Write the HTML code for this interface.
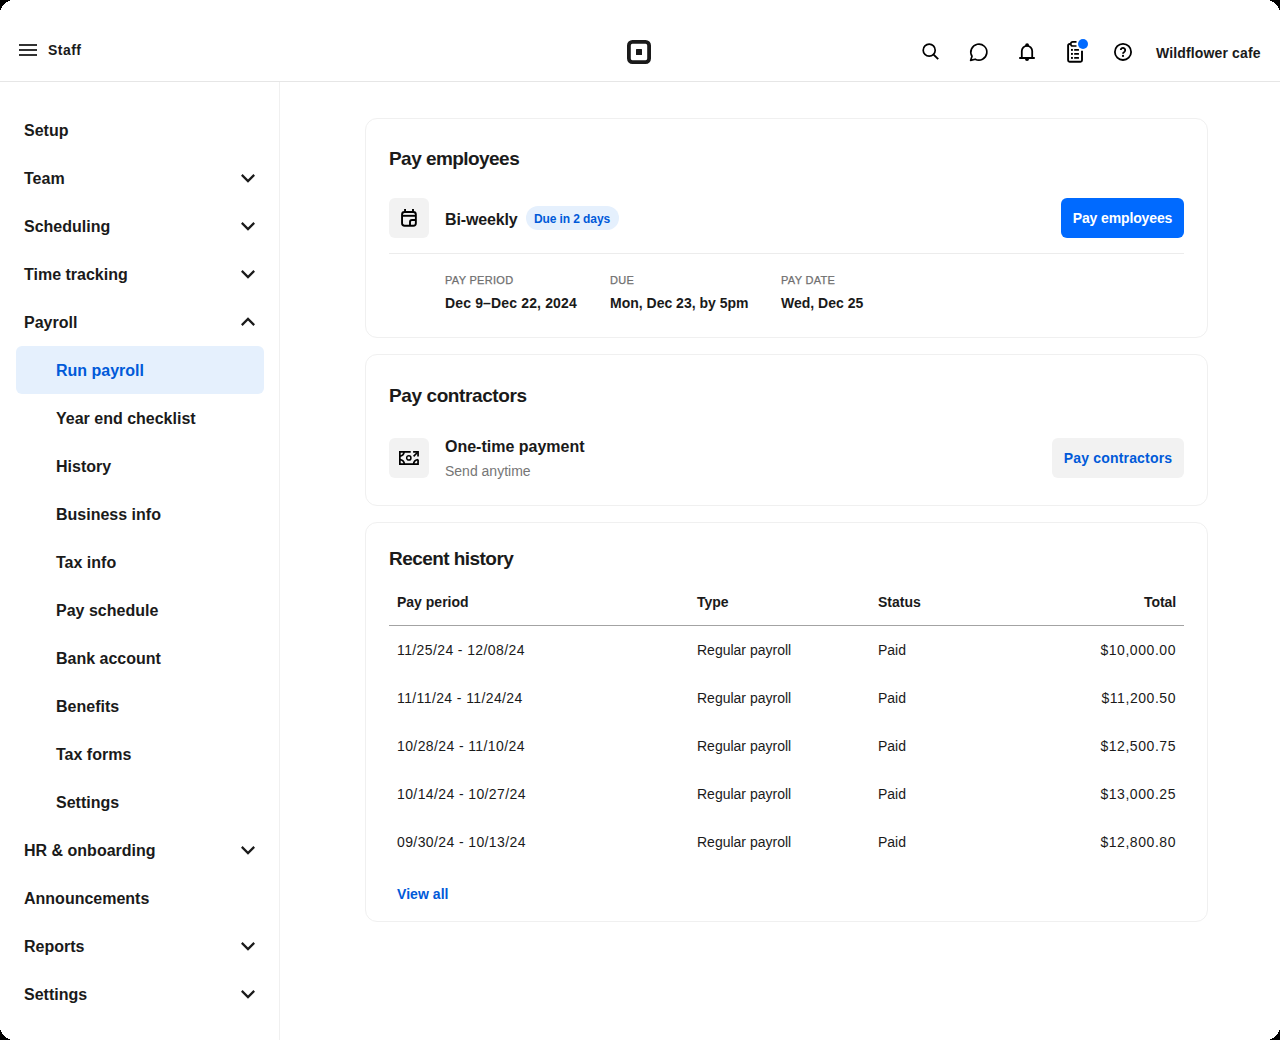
<!DOCTYPE html>
<html><head><meta charset="utf-8">
<style>
*{box-sizing:border-box;margin:0;padding:0}
html,body{width:1280px;height:1040px;background:#000;overflow:hidden}
body{font-family:"Liberation Sans",sans-serif;color:#1a1a1a}
.win{position:absolute;left:0;top:0;width:1280px;height:1040px;background:#fff;overflow:hidden}
.hdr{position:absolute;left:0;top:0;width:1280px;height:82px;border-bottom:1px solid #e6e6e6}
.abs{position:absolute}
svg.abs{overflow:visible}
.t{position:absolute;white-space:nowrap;line-height:1}
.side{position:absolute;left:0;top:82px;width:280px;height:958px;border-right:1px solid #f0f0f0}
.nav{position:absolute;left:24px;font-size:16px;font-weight:700;white-space:nowrap;line-height:20px}
.sub{left:56px}
.chev{position:absolute;left:240px;width:16px;height:16px}
.card{position:absolute;left:365px;width:843px;border:1px solid #f0f0f0;border-radius:12px;background:#fff}
.h2{position:absolute;left:23px;font-size:19px;font-weight:700;line-height:24px;white-space:nowrap;letter-spacing:-0.55px}
.ibox{position:absolute;left:23px;width:40px;height:40px;background:#f2f2f2;border-radius:6px}
.ibox svg{position:absolute}
.btn{position:absolute;height:40px;border-radius:6px;display:flex;align-items:center;justify-content:center;font-size:14px;font-weight:700;letter-spacing:-0.2px;white-space:nowrap}
.lbl{position:absolute;white-space:nowrap;line-height:1;font-size:11px;color:#6f6f6f;letter-spacing:0.3px;-webkit-text-stroke:0.25px #6f6f6f}
.val{position:absolute;white-space:nowrap;line-height:1;font-size:14px;font-weight:700;letter-spacing:0.15px}
.th{position:absolute;white-space:nowrap;line-height:1;font-size:14px;font-weight:700}
.td{position:absolute;white-space:nowrap;line-height:1;font-size:14px}
.num{letter-spacing:0.39px}
</style></head><body>
<div class="win">
  <div class="hdr">
    <svg class="abs" style="left:19px;top:44px" width="18" height="13" viewBox="0 0 18 13"><rect x="0" y="0.2" width="18" height="1.6" fill="#000"/><rect x="0" y="5.2" width="18" height="1.6" fill="#000"/><rect x="0" y="10.2" width="18" height="1.6" fill="#000"/></svg>
    <div class="t" style="left:48px;top:43px;font-size:14px;font-weight:700;letter-spacing:0.45px">Staff</div>
    <svg class="abs" style="left:627px;top:40px" width="24" height="24" viewBox="0 0 24 24"><rect x="1.9" y="1.9" width="20.2" height="20.2" rx="3.5" fill="none" stroke="#1a1a1a" stroke-width="3.8"/><rect x="9" y="9" width="6" height="6" rx="0.5" fill="#1a1a1a"/></svg>
    <svg class="abs" style="left:918px;top:40px" width="24" height="24" viewBox="0 0 24 24" fill="none" stroke="#000" stroke-width="1.7"><circle cx="11.2" cy="10.2" r="6"/><path d="M15.6 14.6 L20.2 19.2" stroke-width="1.9"/></svg>
    <svg class="abs" style="left:967px;top:40px" width="24" height="24" viewBox="0 0 24 24" fill="none" stroke="#000" stroke-width="1.7"><path d="M3.6 20.4 L5 16.2 A8 8 0 1 1 8.2 19.2 Z" stroke-linejoin="round"/></svg>
    <svg class="abs" style="left:1015px;top:40px" width="24" height="24" viewBox="0 0 24 24" fill="none" stroke="#000" stroke-width="1.8"><path d="M6.8 18 V11 A5.2 5.2 0 0 1 17.2 11 V18"/><path d="M4.9 18 H19.1" stroke-width="1.8" stroke-linecap="round"/><path d="M10.2 5.2 A1.9 1.9 0 0 1 14 5.2 V6.4 H10.2 Z" fill="#000" stroke="none"/><path d="M10 19 A2 2 0 0 0 14 19 Z" fill="#000" stroke="none"/></svg>
    <svg class="abs" style="left:1063px;top:40px" width="24" height="24" viewBox="0 0 24 24" fill="none" stroke="#000" stroke-width="1.9"><path d="M7.4 4 H6.6 A1.5 1.5 0 0 0 5.1 5.5 V20.25 A1.5 1.5 0 0 0 6.6 21.75 H17.5 A1.5 1.5 0 0 0 19 20.25 V10.7"/><path d="M13.5 1.9 H9.85 A2.05 2.05 0 0 0 9.85 6 H13.5" stroke-width="1.6"/><rect x="8" y="8.95" width="1.9" height="1.9" fill="#000" stroke="none"/><rect x="8" y="12.95" width="1.9" height="1.9" fill="#000" stroke="none"/><rect x="8" y="16.95" width="1.9" height="1.9" fill="#000" stroke="none"/><rect x="11.1" y="9.05" width="4.9" height="1.7" rx="0.5" fill="#000" stroke="none"/><rect x="11.1" y="13.05" width="4.9" height="1.7" rx="0.5" fill="#000" stroke="none"/><rect x="11.1" y="17.05" width="4.9" height="1.7" rx="0.5" fill="#000" stroke="none"/><circle cx="20" cy="4" r="5" fill="#006aff" stroke="none"/></svg>
    <svg class="abs" style="left:1111px;top:40px" width="24" height="24" viewBox="0 0 24 24" fill="none" stroke="#000" stroke-width="1.8"><circle cx="12" cy="11.9" r="8.1"/><path d="M9.8 10.1 A2.2 2.2 0 1 1 13.7 11.5 L12.1 13.2 V13.7" stroke-width="1.8"/><circle cx="12" cy="15.9" r="1.1" fill="#000" stroke="none"/></svg>
    <div class="t" style="left:1156px;top:46px;font-size:14px;font-weight:700;letter-spacing:0.14px">Wildflower cafe</div>
  </div>
  <div class="side">
    <div class="abs" style="left:16px;top:264px;width:248px;height:48px;background:#e5f0fd;border-radius:6px"></div>
    <div class="nav" style="top:39px">Setup</div>
    <div class="nav" style="top:87px">Team</div>
    <svg class="chev" style="top:88px" viewBox="0 0 16 16" fill="none" stroke="#1a1a1a" stroke-width="2.2"><path d="M1.8 4.9 L8 11.1 L14.2 4.9"/></svg>
    <div class="nav" style="top:135px">Scheduling</div>
    <svg class="chev" style="top:136px" viewBox="0 0 16 16" fill="none" stroke="#1a1a1a" stroke-width="2.2"><path d="M1.8 4.9 L8 11.1 L14.2 4.9"/></svg>
    <div class="nav" style="top:183px">Time tracking</div>
    <svg class="chev" style="top:184px" viewBox="0 0 16 16" fill="none" stroke="#1a1a1a" stroke-width="2.2"><path d="M1.8 4.9 L8 11.1 L14.2 4.9"/></svg>
    <div class="nav" style="top:231px">Payroll</div>
    <svg class="chev" style="top:232px" viewBox="0 0 16 16" fill="none" stroke="#1a1a1a" stroke-width="2.2"><path d="M1.8 11.1 L8 4.9 L14.2 11.1"/></svg>
    <div class="nav sub" style="top:279px;color:#005ad9">Run payroll</div>
    <div class="nav sub" style="top:327px">Year end checklist</div>
    <div class="nav sub" style="top:375px">History</div>
    <div class="nav sub" style="top:423px">Business info</div>
    <div class="nav sub" style="top:471px">Tax info</div>
    <div class="nav sub" style="top:519px">Pay schedule</div>
    <div class="nav sub" style="top:567px">Bank account</div>
    <div class="nav sub" style="top:615px">Benefits</div>
    <div class="nav sub" style="top:663px">Tax forms</div>
    <div class="nav sub" style="top:711px">Settings</div>
    <div class="nav" style="top:759px">HR &amp; onboarding</div>
    <svg class="chev" style="top:760px" viewBox="0 0 16 16" fill="none" stroke="#1a1a1a" stroke-width="2.2"><path d="M1.8 4.9 L8 11.1 L14.2 4.9"/></svg>
    <div class="nav" style="top:807px">Announcements</div>
    <div class="nav" style="top:855px">Reports</div>
    <svg class="chev" style="top:856px" viewBox="0 0 16 16" fill="none" stroke="#1a1a1a" stroke-width="2.2"><path d="M1.8 4.9 L8 11.1 L14.2 4.9"/></svg>
    <div class="nav" style="top:903px">Settings</div>
    <svg class="chev" style="top:904px" viewBox="0 0 16 16" fill="none" stroke="#1a1a1a" stroke-width="2.2"><path d="M1.8 4.9 L8 11.1 L14.2 4.9"/></svg>
  </div>
  <div class="card" style="top:118px;height:220px">
    <div class="h2" style="top:28px">Pay employees</div>
    <div class="ibox" style="top:79px"><svg style="left:10px;top:10px" width="20" height="20" viewBox="0 0 20 20" fill="none" stroke="#000" stroke-width="1.9"><rect x="3.05" y="4.05" width="13.8" height="13.7" rx="2.5"/><path d="M3.05 7.8 H16.85"/><path d="M6.05 0.9 V4 M14 0.9 V4"/><path d="M16.85 12 H13 A2 2 0 0 0 11 14 V17.75"/></svg></div>
    <div class="t" style="left:79px;top:93px;font-size:16px;font-weight:700;letter-spacing:-0.15px">Bi-weekly</div>
    <div class="abs" style="left:160px;top:87px;width:93px;height:24px;border-radius:12px;background:#e5f0fd"></div>
    <div class="t" style="left:168px;top:94px;font-size:12px;font-weight:700;color:#005ad9;letter-spacing:-0.1px">Due in 2 days</div>
    <div class="btn" style="left:695px;top:79px;width:123px;background:#006aff;color:#fff;letter-spacing:-0.13px">Pay employees</div>
    <div class="abs" style="left:23px;top:134px;width:795px;height:1px;background:#ececec"></div>
    <div class="lbl" style="left:79px;top:156px">PAY PERIOD</div>
    <div class="val" style="left:79px;top:177px">Dec 9&#8211;Dec 22, 2024</div>
    <div class="lbl" style="left:244px;top:156px">DUE</div>
    <div class="val" style="left:244px;top:177px;letter-spacing:0">Mon, Dec 23, by 5pm</div>
    <div class="lbl" style="left:415px;top:156px">PAY DATE</div>
    <div class="val" style="left:415px;top:177px;letter-spacing:0">Wed, Dec 25</div>
  </div>
  <div class="card" style="top:354px;height:152px">
    <div class="h2" style="top:29px;letter-spacing:-0.4px">Pay contractors</div>
    <div class="ibox" style="top:83px"><svg style="left:10px;top:13px" width="20" height="14" viewBox="0 0 20 14" fill="none" stroke="#000" stroke-width="1.7"><path d="M11.7 0.85 H0.85 V13.05 H19.05 V8.4"/><path d="M14.1 0.85 H19.05 V5.6"/><path d="M18.4 1.5 L14.6 5.3"/><path d="M0.85 5.1 A4.25 4.25 0 0 0 5.1 0.85"/><path d="M0.85 8.6 A4.45 4.45 0 0 1 5.3 13.05"/><path d="M19.05 8.6 A4.45 4.45 0 0 0 14.6 13.05"/><circle cx="9.8" cy="6.9" r="2.15" stroke-width="1.5"/></svg></div>
    <div class="t" style="left:79px;top:84px;font-size:16px;font-weight:700">One-time payment</div>
    <div class="t" style="left:79px;top:109px;font-size:14px;color:#767676">Send anytime</div>
    <div class="btn" style="left:686px;top:83px;width:132px;background:#f2f2f2;color:#005ad9;letter-spacing:0.18px">Pay contractors</div>
  </div>
  <div class="card" style="top:522px;height:400px">
    <div class="h2" style="top:24px">Recent history</div>
    <div class="th" style="left:31px;top:72px">Pay period</div>
    <div class="th" style="left:331px;top:72px">Type</div>
    <div class="th" style="left:512px;top:72px">Status</div>
    <div class="th" style="right:31px;top:72px;letter-spacing:-0.1px">Total</div>
    <div class="abs" style="left:23px;top:102px;width:795px;height:1px;background:#a3a3a3"></div>
    <div class="td num" style="left:31px;top:120px">11/25/24 - 12/08/24</div>
    <div class="td" style="left:331px;top:120px">Regular payroll</div>
    <div class="td" style="left:512px;top:120px">Paid</div>
    <div class="td" style="right:31px;top:120px;letter-spacing:0.55px">$10,000.00</div>
    <div class="td num" style="left:31px;top:168px">11/11/24 - 11/24/24</div>
    <div class="td" style="left:331px;top:168px">Regular payroll</div>
    <div class="td" style="left:512px;top:168px">Paid</div>
    <div class="td" style="right:31px;top:168px;letter-spacing:0.55px">$11,200.50</div>
    <div class="td num" style="left:31px;top:216px">10/28/24 - 11/10/24</div>
    <div class="td" style="left:331px;top:216px">Regular payroll</div>
    <div class="td" style="left:512px;top:216px">Paid</div>
    <div class="td" style="right:31px;top:216px;letter-spacing:0.55px">$12,500.75</div>
    <div class="td num" style="left:31px;top:264px">10/14/24 - 10/27/24</div>
    <div class="td" style="left:331px;top:264px">Regular payroll</div>
    <div class="td" style="left:512px;top:264px">Paid</div>
    <div class="td" style="right:31px;top:264px;letter-spacing:0.55px">$13,000.25</div>
    <div class="td num" style="left:31px;top:312px">09/30/24 - 10/13/24</div>
    <div class="td" style="left:331px;top:312px">Regular payroll</div>
    <div class="td" style="left:512px;top:312px">Paid</div>
    <div class="td" style="right:31px;top:312px;letter-spacing:0.55px">$12,800.80</div>
    <div class="t" style="left:31px;top:364px;font-size:14px;font-weight:700;color:#005ad9;letter-spacing:0.05px">View all</div>
  </div>
  <svg class="abs" style="left:0px;top:0px;transform:none" width="10" height="10" viewBox="0 0 10 10" shape-rendering="crispEdges"><path d="M0 0 H10 V1 H8 V2 H6 V3 H5 V4 H4 V5 H3 V6 H2 V8 H1 V10 H0 Z" fill="#000"/></svg>
  <svg class="abs" style="left:1270px;top:0px;transform:scale(-1,1)" width="10" height="10" viewBox="0 0 10 10" shape-rendering="crispEdges"><path d="M0 0 H10 V1 H8 V2 H6 V3 H5 V4 H4 V5 H3 V6 H2 V8 H1 V10 H0 Z" fill="#000"/></svg>
  <svg class="abs" style="left:0px;top:1030px;transform:scale(1,-1)" width="10" height="10" viewBox="0 0 10 10" shape-rendering="crispEdges"><path d="M0 0 H10 V1 H8 V2 H6 V3 H5 V4 H4 V5 H3 V6 H2 V8 H1 V10 H0 Z" fill="#000"/></svg>
  <svg class="abs" style="left:1270px;top:1030px;transform:scale(-1,-1)" width="10" height="10" viewBox="0 0 10 10" shape-rendering="crispEdges"><path d="M0 0 H10 V1 H8 V2 H6 V3 H5 V4 H4 V5 H3 V6 H2 V8 H1 V10 H0 Z" fill="#000"/></svg>
</div>
</body></html>
